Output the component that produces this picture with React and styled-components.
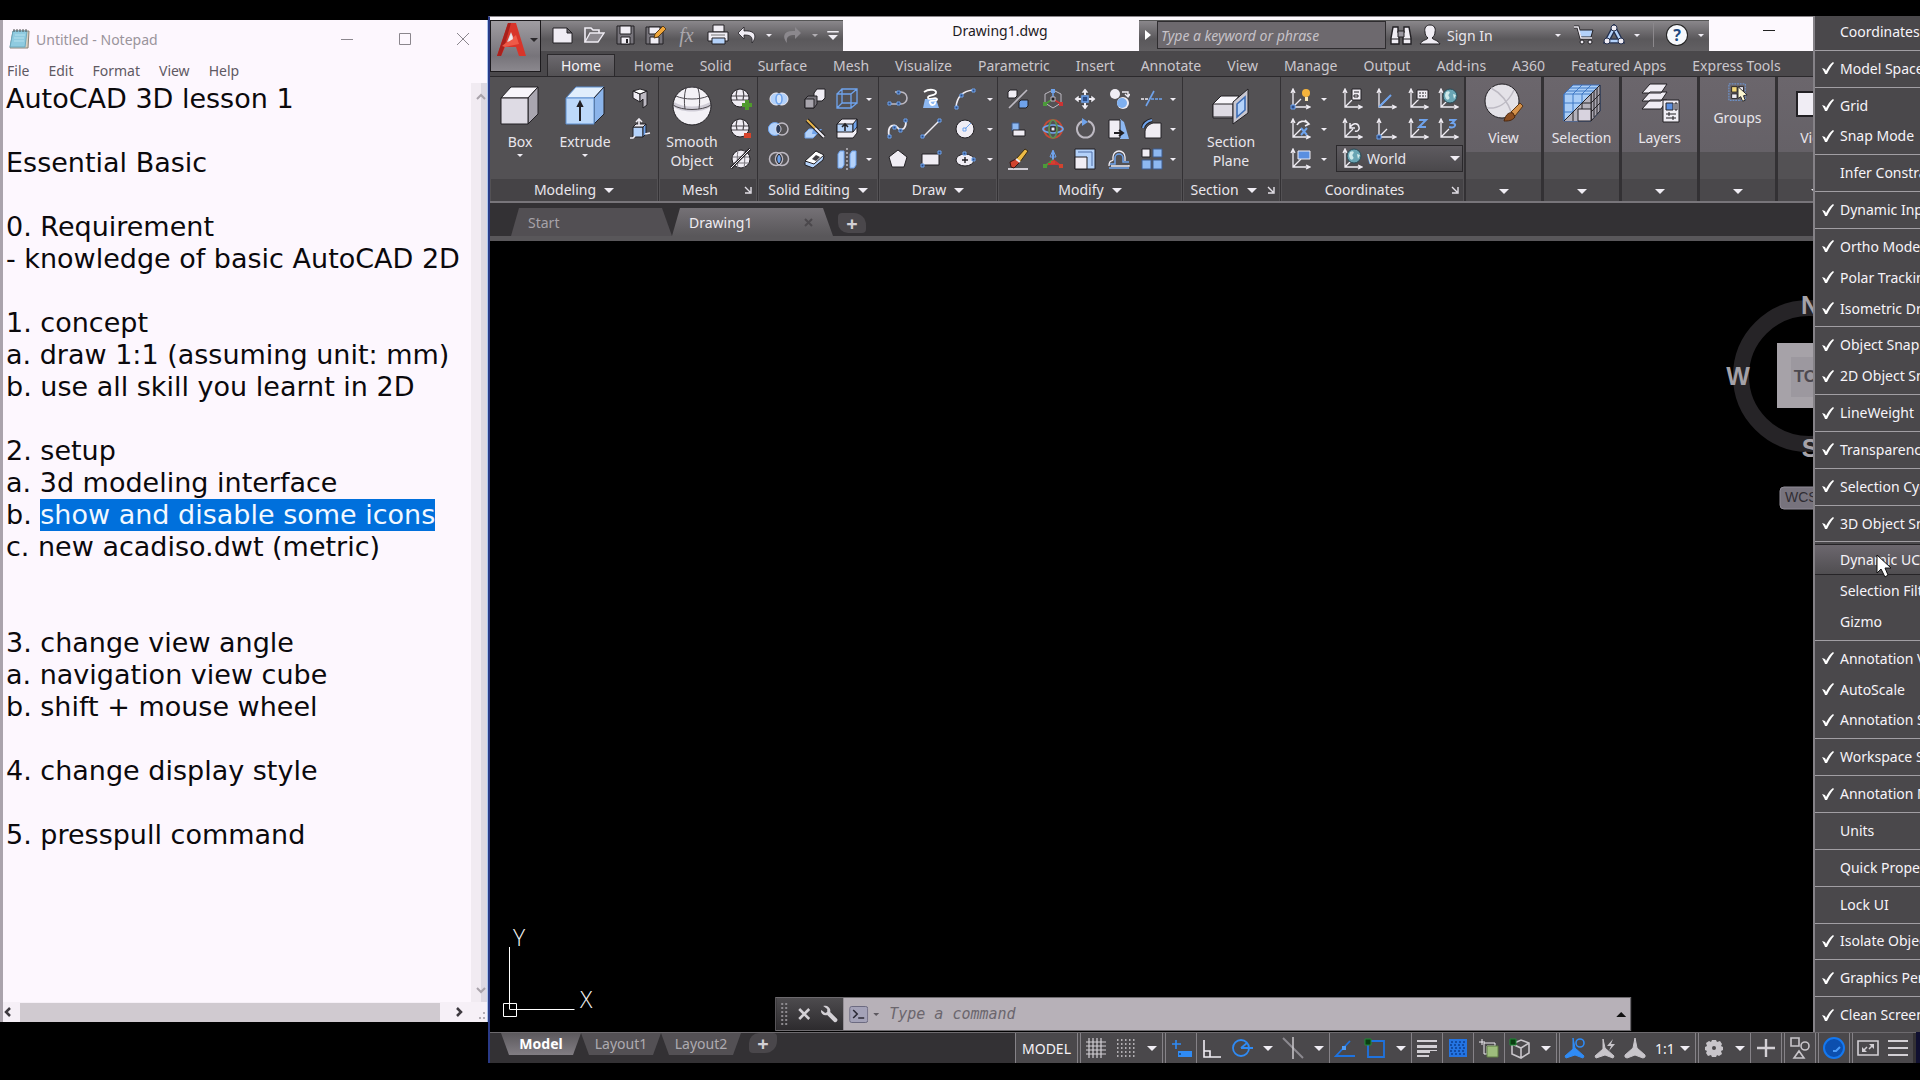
import React, { useEffect, useRef, useState } from 'react';
import styled, { createGlobalStyle, css } from 'styled-components';

const NOTE_TEXT = `AutoCAD 3D lesson 1

Essential Basic

0. Requirement
- knowledge of basic AutoCAD 2D

1. concept
a. draw 1:1 (assuming unit: mm)
b. use all skill you learnt in 2D

2. setup
a. 3d modeling interface
b. show and disable some icons
c. new acadiso.dwt (metric)


3. change view angle
a. navigation view cube
b. shift + mouse wheel

4. change display style

5. presspull command`;
const SELECTED_TEXT = 'show and disable some icons';

const RIBBON_TABS = [
  'Home',
  'Solid',
  'Surface',
  'Mesh',
  'Visualize',
  'Parametric',
  'Insert',
  'Annotate',
  'View',
  'Manage',
  'Output',
  'Add-ins',
  'A360',
  'Featured Apps',
  'Express Tools',
];

// every inner array is one block between two separator lines
const MENU_GROUPS = [
  [['Coordinates', false]],
  [['Model Space', true]],
  [['Grid', true], ['Snap Mode', true]],
  [['Infer Constraints', false]],
  [['Dynamic Input', true]],
  [['Ortho Mode', true], ['Polar Tracking', true], ['Isometric Drafting', true]],
  [['Object Snap Tracking', true], ['2D Object Snap', true]],
  [['LineWeight', true]],
  [['Transparency', true]],
  [['Selection Cycling', true]],
  [['3D Object Snap', true]],
  [['Dynamic UCS', false], ['Selection Filtering', false], ['Gizmo', false]],
  [['Annotation Visibility', true], ['AutoScale', true], ['Annotation Scale', true]],
  [['Workspace Switching', true]],
  [['Annotation Monitor', true]],
  [['Units', false]],
  [['Quick Properties', false]],
  [['Lock UI', false]],
  [['Isolate Objects', true]],
  [['Graphics Performance', true]],
  [['Clean Screen', true]],
];

const W = '#f0edf4';
const G = '#bdb9c2';
const D = '#222024';
const B = '#6fa3ec';
const LB = '#b4d2fa';

const axes = (
  <path
    d="M4 2v17h16M2 5l2-4 2 4M17 17l4 2-4 2M4 19l8-8"
    fill="none"
    stroke={W}
    strokeWidth="1.3"
  />
);
const meshBall = (
  <>
    <circle cx="10" cy="10" r="9" fill={W} stroke={D} />
    <path
      d="M1.500 8h17M2 12h16M7 1.500C6 5 6 9 7 12M13 1.500c1 3.500 1 7 0 10.500"
      fill="none"
      stroke="#4a474c"
      strokeWidth="1.2"
    />
  </>
);

// all small drawings sit on a 22x22 grid
const icons = {
  newFile: <path d="M1 4h14l5 5v10H1zM15 4v5h5" fill={W} stroke={D} />,
  open: (
    <>
      <path d="M2 18V4h6l2 2h6v4" fill="none" stroke={W} strokeWidth="1.6" />
      <path d="M2 18L7 9h14l-6 9z" fill="#8d8a90" stroke={W} strokeWidth="1.3" />
    </>
  ),
  save: (
    <>
      <path d="M3 2h17v18H3z" fill="#77747b" stroke={D} />
      <path d="M6 2h11v8H6zM7 13h9v7H7z" fill={W} stroke={D} />
      <path d="M12 15h2v4h-2z" fill={D} />
    </>
  ),
  saveAs: (
    <>
      <path d="M1 3h17v17H1z" fill="#77747b" stroke={D} />
      <path d="M4 3h11v7H4zM5 13h9v7H5z" fill={W} stroke={D} />
      <path d="M9 14l1-4 8-8 3 3-8 8z" fill="#f0a63a" stroke="#5a3c16" />
    </>
  ),
  print: (
    <>
      <path d="M6 1h11v7H6z" fill={W} stroke={D} />
      <path d="M1 8h20v9H1z" fill={W} stroke={D} />
      <path d="M5 14h13v6H5z" fill={LB} stroke={D} />
      <path d="M4 11h14" stroke="#777" />
    </>
  ),
  undo: (
    <path
      d="M8 3L2 9l6 6v-4c6 0 9 1 8 8 5-6 4-13-8-12z"
      fill={W}
      stroke={D}
      strokeWidth=".8"
    />
  ),
  redo: <path d="M14 3l6 6-6 6v-4c-6 0-9 1-8 8-5-6-4-13 8-12z" fill="#8b888d" />,
  more: <path d="M4 6h14v2H4zM5 11h12l-6 6z" fill={W} />,
  binoculars: (
    <>
      <path d="M3 3h5v5h1v12H1v-6zM14 3h5l2 11v6h-8V8h1z" fill={W} stroke={D} strokeWidth="1.4" />
      <path d="M8 7h6v6H8z" fill="#9a97a0" stroke={D} />
      <path d="M1 15h8M13 15h8" stroke={D} />
    </>
  ),
  person: (
    <path
      d="M11 1c4 0 6 3 5 7 0 3-1 4-3 6 1 2 6 2 8 6H1c2-4 7-4 8-6-2-2-3-3-3-6-1-4 1-7 5-7z"
      fill={W}
      stroke={D}
    />
  ),
  cart: (
    <>
      <path d="M1 3h4l3 11h11" fill="none" stroke={D} strokeWidth="3" />
      <path d="M5 6h15l-2 7H8z" fill={LB} stroke={D} />
      <path d="M1 3h4l3 11h11" fill="none" stroke={W} strokeWidth="1.4" />
      <circle cx="9" cy="18" r="2" fill={W} stroke={D} />
      <circle cx="17" cy="18" r="2" fill={W} stroke={D} />
    </>
  ),
  exchange: (
    <>
      <path d="M11 4L4 17h14z" fill="none" stroke="#24304f" strokeWidth="5" />
      <path d="M11 4L4 17h14z" fill="none" stroke={LB} strokeWidth="2.4" />
      <circle cx="11" cy="4" r="3" fill={W} stroke="#24304f" />
      <circle cx="4" cy="17" r="3" fill={W} stroke="#24304f" />
      <circle cx="18" cy="17" r="3" fill={W} stroke="#24304f" />
    </>
  ),
  polysolid: (
    <>
      <path d="M4 3l7 3v8l-7-4z" fill={W} stroke={D} />
      <path d="M11 6l7-3v14l-4 3v-9l-3 3z" fill={G} stroke={D} />
      <path d="M4 3l7-2 7 2-7 3z" fill="#fff" stroke={D} />
    </>
  ),
  presspull: (
    <>
      <path d="M4 9h10v10H4z" fill={LB} stroke={D} />
      <path d="M4 9l3-3h10l-3 3z" fill={W} stroke={D} />
      <path d="M14 9l3-3v10l-3 3z" fill={B} stroke={D} />
      <path d="M10 8V1M7 4l3-3 3 3M1 20h3l2-2M16 16l5-1" fill="none" stroke={W} strokeWidth="1.6" />
    </>
  ),
  meshAdd: (
    <>
      {meshBall}
      <path d="M15 12h4v3h3v4h-3v3h-4v-3h-3v-4h3z" fill="#4f9a2c" />
    </>
  ),
  meshLess: (
    <>
      {meshBall}
      <path d="M14 15h7v5h-7z" fill="#d6432b" />
    </>
  ),
  meshCrease: (
    <>
      <circle cx="11" cy="11" r="9" fill={W} stroke={D} />
      <path d="M2 9h17M8 2c-1 6-1 12 0 18M14 2c1 6 1 12 0 18M3 15h16" fill="none" stroke="#77747b" />
      <path d="M1 20L20 1" stroke={D} strokeWidth="2.500" />
      <path d="M1 20L20 1" stroke={W} />
    </>
  ),
  union: (
    <>
      <path d="M8 5c2 0 2 .5 3 1 1-.5 1-1 3-1a6 6 0 010 12c-2 0-2-.5-3-1-1 .5-1 1-3 1A6 6 0 018 5z" fill={LB} stroke={W} />
      <ellipse cx="11" cy="11" rx="3" ry="5" fill="#d5e5fb" stroke={B} strokeWidth="1.6" />
    </>
  ),
  subtract: (
    <>
      <circle cx="14" cy="11" r="6" fill="none" stroke={G} strokeWidth="1.5" />
      <path d="M11 6a6.500 6.500 0 100 10c-3-3-3-7 0-10z" fill={LB} stroke={B} />
      <path d="M10 6c-3 3-3 7 0 10 4-3 4-7 0-10z" fill="#2e3c58" stroke={W} strokeWidth=".8" />
    </>
  ),
  intersect: (
    <>
      <circle cx="8" cy="11" r="6.500" fill="none" stroke={G} strokeWidth="1.5" />
      <circle cx="14" cy="11" r="6.500" fill="none" stroke={G} strokeWidth="1.5" />
      <path d="M11 6c3 3 3 7 0 10-3-3-3-7 0-10z" fill={B} stroke={D} />
    </>
  ),
  extractEdges: (
    <>
      <path d="M10 5l3-4h8v9l-3 3h-8z" fill={W} stroke={D} />
      <path d="M1 11l3-3h9v8l-3 4H1z" fill="#77747b" stroke={D} />
      <path d="M1 11h9v9H1z" fill="#a9a6ae" stroke={D} />
    </>
  ),
  slice: (
    <>
      <path d="M1 15l4-4h9l-2 6-3 3H1z" fill={LB} stroke={B} />
      <path d="M9 11h9l-3 5H8z" fill={B} />
      <path d="M3 2l9 9 8 8" stroke={D} strokeWidth="4" />
      <path d="M3 2l8 8" stroke="#e9b64b" strokeWidth="2" />
      <path d="M11 10l9 9" stroke={W} strokeWidth="2" />
    </>
  ),
  thicken: (
    <>
      <path d="M1 14L12 3l8 5-1 4-10 8-8-3z" fill={LB} stroke={D} />
      <path d="M1 13L12 3l8 4-10 9z" fill="#fff" stroke={D} />
      <path d="M8 11l4-4 4 2-4 4z" fill="#3f3d42" />
    </>
  ),
  wireBox: (
    <path
      d="M1 6h14v14H1zM6 1h15v14H6zM1 6l5-5M15 6l6-5M15 20l6-5M1 20l5-5"
      fill="none"
      stroke={B}
      strokeWidth="1.3"
    />
  ),
  extrudeFace: (
    <>
      <path d="M1 6l5-5h15v14l-4 5H1z" fill={W} stroke={D} />
      <path d="M1 6h16v8H1z" fill={LB} stroke={D} />
      <path d="M17 6l4-5v8l-4 5z" fill={B} stroke={D} />
      <path d="M9 13V7M6 9l3-3 3 3" fill="none" stroke={D} strokeWidth="1.6" />
    </>
  ),
  separate: (
    <>
      <path d="M2 6l2-3h4v14l-2 3H2z" fill={LB} stroke={B} />
      <path d="M14 6l2-3h4v14l-2 3h-4z" fill={LB} stroke={B} />
      <path d="M11 0v22" stroke={W} strokeDasharray="2 2" />
    </>
  ),
  polyline: (
    <>
      <path d="M2 16h8M8 4h6a6 6 0 010 12h-2" fill="none" stroke={G} strokeWidth="1.6" />
      <path d="M1 14h3v3H1zM10 14h3v3h-3zM10 3h3v3h-3z" fill="#2c4c86" stroke={B} />
    </>
  ),
  helix: (
    <>
      <path d="M3 20l2-9h11l3 9z" fill="#8db8f2" />
      <path
        d="M4 4c6-4 13-2 12 1s-9 2-8 5 8-2 9 1-9 0-7 4 6 1 5-1"
        fill="none"
        stroke="#fff"
        strokeWidth="1.8"
      />
    </>
  ),
  spline: (
    <>
      <path d="M2 18c-2-12 6-12 8-9s9 5 9-6" fill="none" stroke={W} strokeWidth="1.8" />
      <path d="M1 17h3v3H1zM6 8h3v3H6zM12 11h3v3h-3zM17 1h3v3h-3z" fill="#2c4c86" stroke={B} />
    </>
  ),
  line: (
    <>
      <path d="M3 19L19 3" stroke={W} strokeWidth="1.5" />
      <path d="M1 17h3v3H1zM18 1h3v3h-3z" fill="#2c4c86" stroke={B} />
    </>
  ),
  polygon: <path d="M11 2l9 7-3 10H5L2 9z" fill={W} stroke={D} />,
  rectangle: (
    <>
      <path d="M2 6h17v11H2z" fill={W} stroke={D} />
      <path d="M1 16h3v3H1zM18 3h3v3h-3z" fill="#2c4c86" stroke={B} />
    </>
  ),
  arc: (
    <>
      <path d="M2 19C3 9 9 3 19 2" fill="none" stroke={W} strokeWidth="1.6" />
      <path d="M1 18h3v3H1zM6 6h3v3H6zM18 1h3v3h-3z" fill="#2c4c86" stroke={B} />
    </>
  ),
  circle: (
    <>
      <circle cx="11" cy="11" r="9" fill={W} stroke={D} />
      <path d="M11 11l6-6M9 10h3v3H9z" fill="none" stroke={B} />
    </>
  ),
  ellipse: (
    <>
      <ellipse cx="11" cy="12" rx="9" ry="6" fill={W} stroke={D} />
      <path d="M11 9v6M8 12h6" stroke={D} strokeWidth="1.4" />
      <path d="M9 4h3v3H9zM18 10h3v3h-3z" fill="#2c4c86" stroke={B} />
    </>
  ),
  flip: (
    <>
      <path d="M1 4l2-2h7v6l-2 2H1z" fill={W} stroke={D} />
      <path d="M12 14l2-2h7v6l-2 2h-7z" fill={B} stroke={D} />
      <path d="M2 20L20 2" stroke={G} strokeWidth="1.6" />
    </>
  ),
  gizmoMove: (
    <>
      <path d="M11 2l8 4v9l-8 5-8-5V6z" fill="none" stroke={G} />
      <path d="M11 11V2" stroke={B} strokeWidth="1.5" />
      <path d="M11 11l-8 5" stroke="#4c9a3a" strokeWidth="1.5" />
      <path d="M11 11l8 5" stroke="#c33" strokeWidth="1.5" />
      <path d="M9 1h4v4H9z" fill={B} />
      <path d="M1 14h4v4H1z" fill="#4c9a3a" />
      <path d="M17 14h4v4h-4z" fill="#c33" />
      <path d="M9 9h4v4H9z" fill={D} stroke={G} />
    </>
  ),
  move: (
    <>
      <path
        d="M11 0l4 5H7zM11 22l4-5H7zM0 11l5-4v8zM22 11l-5-4v8z"
        fill={W}
        stroke={D}
        strokeWidth=".5"
      />
      <path d="M11 4v3M11 15v3M4 11h3M15 11h3" stroke={W} strokeWidth="2" />
      <path d="M8 8h6v6H8z" fill="#2c4c86" stroke={B} strokeWidth="1.5" />
    </>
  ),
  copy: (
    <>
      <circle cx="7" cy="6" r="5" fill={W} />
      <path d="M14 4h6v5M17 6l3 3 2-3" fill="none" stroke={W} strokeWidth="1.4" />
      <circle cx="15" cy="15" r="6" fill={W} />
      <circle cx="14" cy="15" r="5" fill="#7fb0f0" />
    </>
  ),
  trim: (
    <>
      <path d="M0 11h9" stroke={W} strokeDasharray="3 1" strokeWidth="1.5" />
      <path d="M10 11h12" stroke={B} strokeDasharray="3 1" strokeWidth="1.5" />
      <path d="M5 18L13 3" stroke={B} strokeWidth="1.6" />
    </>
  ),
  align: (
    <>
      <path d="M5 5h7v8H5z" fill="#8db8f2" stroke="#3e5c8e" />
      <path d="M6 12h12v6H6z" fill={W} stroke={D} />
    </>
  ),
  gizmoRotate: (
    <>
      <circle cx="11" cy="11" r="9" fill="none" stroke="#c94a35" strokeWidth="2" />
      <ellipse cx="11" cy="11" rx="10" ry="4" fill="none" stroke={B} strokeWidth="1.7" />
      <ellipse cx="11" cy="11" rx="4" ry="9" fill="none" stroke="#5b8f53" strokeWidth="1.7" />
      <path d="M9 9h4v4H9z" fill={W} stroke={D} />
    </>
  ),
  rotate: (
    <>
      <path d="M9 3a8.500 8.500 0 105 0" fill="none" stroke={G} strokeWidth="2" />
      <path d="M8 0l6 4-6 4z" fill={B} />
    </>
  ),
  taper: (
    <>
      <path d="M12 1l4 3 5 17H12z" fill="#8db8f2" />
      <path d="M1 2h11v18H1z" fill={W} stroke={D} />
      <path d="M6 15h8M11 12l4 3-4 3" fill="none" stroke={D} strokeWidth="2" />
    </>
  ),
  fillet: (
    <>
      <path d="M4 20V13c1-5 5-7 8-8h8v15z" fill={W} stroke={D} />
      <path d="M2 10c1-5 5-7 9-8" fill="none" stroke={D} strokeWidth="4" />
      <path d="M2 10c1-5 5-7 9-8" fill="none" stroke={B} strokeWidth="2" />
    </>
  ),
  erase: (
    <>
      <path d="M1 21h20" stroke={W} strokeWidth="1.6" />
      <path d="M9 11L18 1l3 2-8 11z" fill="#eebb45" stroke="#3a2c12" />
      <path d="M3 14l6-3 4 3-6 6-3-1z" fill="#d1432e" stroke="#3a1612" />
      <path d="M9 11l4 3" stroke={W} strokeWidth="2" />
    </>
  ),
  gizmoScale: (
    <>
      <path d="M11 3v9" stroke={B} strokeWidth="2" />
      <path d="M11 12l-8 6" stroke="#4c9a3a" strokeWidth="2" />
      <path d="M11 12l8 6M6 16h10" stroke="#c33" strokeWidth="2" />
      <path d="M8 9l3-7 3 7z" fill="none" stroke={B} />
      <path d="M1 16h4v4H1z" fill="#4c9a3a" />
      <path d="M17 16h4v4h-4zM9 13h4v3H9z" fill="#d1432e" />
    </>
  ),
  scale: (
    <>
      <path d="M1 1h20v20H1z" fill={LB} stroke={D} />
      <path d="M4 4h14v14" fill="none" stroke="#4f6fa8" />
      <path d="M1 9h12v12H1z" fill={W} stroke={D} />
    </>
  ),
  offset: (
    <>
      <path d="M1 20h20M1 16h6v-6a4 4 0 018 0v4h6" fill="none" stroke={B} strokeWidth="1.5" />
      <path d="M3 18h18v-1M1 18c0-7 3-4 4-6V9a6 6 0 0112 0v4" fill="none" stroke={W} strokeWidth="1.3" />
    </>
  ),
  array: (
    <>
      <path d="M1 1h8v8H1z" fill={W} stroke={D} />
      <path d="M12 1h9v8h-9zM1 12h9v9H1zM12 12h9v9h-9z" fill="#8db8f2" stroke="#3e5c8e" />
    </>
  ),
  ucs: (
    <>
      {axes}
      <path d="M2 17h4v4H2z" fill="#2c4c86" stroke={B} />
      <circle cx="17" cy="5" r="4" fill="#f6b43c" />
      <path d="M16 9h3v4h-3z" fill="#fbe7b5" />
    </>
  ),
  ucsNamed: (
    <>
      {axes}
      <path d="M11 1h9v11h-9z" fill={W} stroke={D} />
      <path d="M13 4h5M13 7h4v2h-4z" fill="none" stroke={D} />
    </>
  ),
  ucsOrigin: (
    <>
      {axes}
      <path d="M4 19L16 7" stroke={B} strokeWidth="2" />
    </>
  ),
  ucsIcon: (
    <>
      {axes}
      <path d="M10 2h11v9H10z" fill={W} stroke={D} />
      <path d="M12 5h7M12 8h7" stroke={D} strokeDasharray="2 1" />
    </>
  ),
  ucsWorld: (
    <>
      {axes}
      <circle cx="13" cy="8" r="7" fill="#69a5b4" stroke="#2b4a55" />
      <path d="M9 4c3-2 5 0 3 2s2 3 0 5-4-1-4-4zM16 6l3 1-2 4z" fill="#cfe9ea" />
    </>
  ),
  ucsX: (
    <>
      {axes}
      <path d="M8 7c2-4 7-5 11-2M16 2l4 4-4 2" fill="none" stroke={W} strokeWidth="1.6" />
      <path d="M12 10l6 7M18 10l-6 7" stroke={B} strokeWidth="2" />
    </>
  ),
  ucsPrev: (
    <>
      {axes}
      <path d="M9 5v5h5M9 10c2-5 8-6 9-1 1 3-2 5-4 4" fill="none" stroke={W} strokeWidth="1.5" />
    </>
  ),
  ucsView: (
    <>
      {axes}
      <path d="M2 17h4v4H2z" fill="#2c4c86" stroke={B} />
    </>
  ),
  ucsZ: (
    <>
      {axes}
      <path d="M12 2h7l-7 7h7" fill="none" stroke={B} strokeWidth="2" />
    </>
  ),
  ucs3: (
    <>
      {axes}
      <path d="M12 2h6l-3 3c5 0 4 6-3 4" fill="none" stroke={B} strokeWidth="2" />
    </>
  ),
  ucsFace: (
    <>
      {axes}
      <path d="M9 3h12v8H9z" fill="#5b8fe0" stroke={W} />
    </>
  ),
  groups: (
    <>
      <path d="M1 1h18v18H1z" fill="none" stroke={B} strokeDasharray="2 1" />
      <path d="M4 4h6v6H4z" fill="#f3d77a" stroke={D} />
      <path d="M4 12h6v5H4zM12 4h5v5h-5z" fill={W} stroke={D} />
      <path d="M11 4l10 9-4 1 2 5-3 1-2-5-3 2z" fill="#fbf6d2" stroke={D} />
    </>
  ),
  gridLines: (
    <path
      d="M4 1v20M8 1v20M12 1v20M16 1v20M1 5h20M1 9h20M1 13h20M1 17h20"
      stroke="#d3d0d5"
      strokeWidth="1.2"
      strokeDasharray="20"
    />
  ),
  gridDots: (
    <path
      d="M2 3h19M2 7h19M2 11h19M2 15h19M2 19h19"
      stroke="#d3d0d5"
      strokeWidth="1.5"
      strokeDasharray="1.5 2.500"
    />
  ),
  dynInput: (
    <>
      <path d="M6 3v9M2 7h9" stroke="#2f8bf5" strokeWidth="1.6" />
      <path d="M8 14h14v6H8z" fill="#2f8bf5" />
      <path d="M10 16v2" stroke="#123" />
    </>
  ),
  ortho: <path d="M3 3v17h17M3 14h6v6" fill="none" stroke={W} strokeWidth="1.6" />,
  polar: (
    <>
      <circle cx="10" cy="11" r="8" fill="none" stroke="#2f8bf5" strokeWidth="1.8" />
      <path d="M10 11h12M10 11l6-5" stroke="#2f8bf5" strokeWidth="1.8" />
    </>
  ),
  isoDraft: (
    <>
      <path d="M1 1l20 20" stroke="#8d8a90" strokeWidth="2" />
      <path d="M11 0v22" stroke="#d3d0d5" strokeWidth="1.4" />
    </>
  ),
  otrack: (
    <>
      <path d="M16 4L2 19h19" fill="none" stroke="#1e73e0" strokeWidth="1.8" />
      <path d="M8 9h4v4H8z" fill="#4d9cf7" />
    </>
  ),
  osnap: (
    <>
      <path d="M4 4h16v16H4z" fill="none" stroke="#1e73e0" strokeWidth="1.8" />
      <path d="M1 2h6v6H1z" fill="#0b3d12" stroke="#1e8a35" />
    </>
  ),
  lineweight: <path d="M1 3h20v2H1zM1 8h20v3H1zM1 13h13v3H1zM14 13h7v1h-7zM1 18h12v2H1z" fill="#d3d0d5" />,
  transparency: (
    <>
      <path d="M2 2h18v18H2z" fill="#2474e2" />
      <path
        d="M4 5h15M3 8h15M4 11h15M3 14h15M4 17h15"
        stroke="#0d3f91"
        strokeWidth="1.5"
        strokeDasharray="2 2"
      />
    </>
  ),
  cycling: (
    <>
      <path d="M4 2v6M1 5h6" stroke={W} />
      <path d="M6 6h11v3H9v8H6z" fill="none" stroke={W} />
      <path d="M9 9h11v11H9z" fill="#9dbd7c" stroke="#5f7c45" />
    </>
  ),
  osnap3d: (
    <>
      <path
        d="M3 7l9-4 8 3v10l-8 5-9-4zM3 7l9 4 8-5M12 11v10"
        fill="none"
        stroke="#c8c5ca"
        strokeWidth="1.6"
      />
      <path d="M1 2h6v6H1z" fill="#0b3d12" stroke="#1e8a35" />
    </>
  ),
  annBlue: (
    <>
      <path d="M9 1l2 10 9 8-1 2-8-3-9 3-1-2 8-7z" fill="#2f8bf5" stroke="#2f8bf5" />
      <circle cx="16" cy="6" r="4" fill="none" stroke="#2f8bf5" strokeWidth="1.6" />
    </>
  ),
  annAuto: (
    <>
      <path d="M9 2l2 9 9 8-1 2-8-3-9 3-1-2 8-7z" fill="#c8c5ca" stroke="#c8c5ca" />
      <path d="M19 2l-6 7h4l-2 5 6-7h-4z" fill="#c8c5ca" />
    </>
  ),
  ann: (
    <path
      d="M11 1l2 10 8 7v2l-2 1-8-3-8 3-2-1v-2l8-7z"
      fill="#c8c5ca"
      stroke="#c8c5ca"
    />
  ),
  gear: (
    <>
      <path
        d="M9 3h4l1 2 3-1 2 3-1 2 2 1v3l-2 1 1 3-3 2-2-1-1 2H9l-1-2-3 1-2-3 1-2-2-1v-3l2-1-1-3 3-2 2 1z"
        fill="#c8c5ca"
      />
      <circle cx="11" cy="11" r="2" fill="#4a484b" />
    </>
  ),
  plus: <path d="M11 2v18M2 11h18" stroke="#d3d0d5" strokeWidth="2.4" />,
  isolate: (
    <path
      d="M2 1h8v8H2zM10 14l5 7H5zM16 5a4 4 0 100 8 4 4 0 100-8z"
      fill="none"
      stroke="#c8c5ca"
      strokeWidth="1.6"
    />
  ),
  perf: (
    <>
      <circle cx="11" cy="11" r="10" fill="#0c4fae" stroke="#1478f0" strokeWidth="2" />
      <path d="M10 14h3l4-4" fill="none" stroke="#4b9bf8" strokeWidth="2" />
    </>
  ),
  fullscreen: (
    <>
      <path d="M1 4h20v14H1z" fill="none" stroke="#d3d0d5" strokeWidth="1.6" />
      <path d="M5 15v-5l5 5zM17 7v5l-5-5z" fill="#d3d0d5" />
      <path d="M7 13l3-3M15 9l-3 3" stroke="#d3d0d5" strokeWidth="1.5" />
    </>
  ),
  burger: <path d="M1 4h20M1 11h20M1 18h20" stroke="#d3d0d5" strokeWidth="2.2" />,
};

// large ribbon drawings, 40x40 grid
const bigIcons = {
  box: (
    <>
      <path d="M1 12L11 1h27L28 12z" fill="#f8f6fb" stroke={D} />
      <path d="M28 12L38 1v27L28 38z" fill="#a9a6b0" stroke={D} />
      <path d="M1 12h27v26H1z" fill="#dedbe4" stroke={D} />
    </>
  ),
  extrude: (
    <>
      <path d="M1 12L11 1h28L29 12z" fill="#e1eefc" stroke="#5d8fd0" />
      <path d="M29 12L39 1v27L29 38z" fill="#8bb4ea" stroke={D} />
      <path d="M1 12h28v26H1z" fill="#bdd9fa" stroke="#5d8fd0" />
      <path d="M15 35V18M13 20l2-4 2 4z" stroke={D} strokeWidth="2" fill={D} />
    </>
  ),
  smooth: (
    <>
      <circle cx="20" cy="20" r="19" fill="#f3f1f6" stroke={D} />
      <path d="M2 16c10 6 26 6 36 0v5c-8 6-28 6-36 0z" fill="#cfccd6" />
      <path
        d="M1 19c9 6 29 6 38 0M4 10c8 4 24 4 32 0M14 2c-2 7-2 14-1 21M26 2c2 7 2 14 1 21M14 2c4-2 8-2 12 0"
        fill="none"
        stroke="#4d4a50"
      />
    </>
  ),
  section: (
    <>
      <path d="M2 18l8-8h18l-6 8v14H2z" fill="#f8f6fb" stroke={D} />
      <path d="M2 18h20v13H2z" fill="#dedbe4" stroke={D} />
      <path d="M22 16L37 3v24L22 38z" fill="#c9c7d0" stroke={D} />
      <path d="M26 18l8-7v13l-8 7z" fill={LB} stroke="#3e6db5" strokeWidth="1.6" />
    </>
  ),
  view: (
    <>
      <circle cx="18" cy="18" r="17" fill="#e4e2e8" stroke={D} />
      <path d="M7 5c10 5 17 14 21 26M30 7C24 20 14 26 3 25" fill="none" stroke="#bdbac3" strokeWidth="1.5" />
      <path d="M27 29L36 20l3 3-8 10z" fill="#d5924a" stroke="#5b3514" />
      <path d="M20 38c2-8 6-9 9-8l2 4c-3 4-7 4-11 4z" fill="#8c4e21" stroke="#4b270d" />
    </>
  ),
  selection: (
    <>
      <path d="M2 11L11 2h27v26l-9 10H2z" fill="#a9cdf7" stroke="#3e6db5" />
      <path d="M29 11l9-9v26l-9 10z" fill="#aaa7b2" stroke={D} />
      <path d="M2 38L29 11v27z" fill="#b4b1bb" />
      <path
        d="M2 11h27M2 20h18M2 29h9M2 11v27M11 11v18M20 11v9M11 11l9-9M20 11l9-9M5 8h27M8 5h27"
        fill="none"
        stroke="#3f78c4"
      />
      <path
        d="M32 8v26M35 5v26M29 20l9-9M29 29l9-9M2 38L29 11v27M20 20v18M11 29v9M20 20h9"
        fill="none"
        stroke={D}
      />
      <path d="M16 26h13v12H16z" fill="#d8d3df" stroke={D} />
    </>
  ),
  layers: (
    <>
      <path d="M2 26l8-9h17l-6 9zM2 18l8-9h17l-6 9zM2 10l8-9h17l-6 9z" fill={W} stroke={D} />
      <path d="M23 17h16v22H23z" fill={W} stroke={D} />
      <path d="M26 20h7v7h-7z" fill="#5b8fe0" stroke={D} />
      <path d="M35 20h2v7h-2zM26 31h10M26 35h10M29 29v4M33 33v4" fill="none" stroke={D} />
    </>
  ),
  viewport: <path d="M1 9h34v24H1z" fill={W} stroke={D} strokeWidth="2" />,
};

function Icon({ name, size = 22 }) {
  return (
    <svg width={size} height={size} viewBox="0 0 22 22" aria-hidden="true">
      {icons[name]}
    </svg>
  );
}

function BigIcon({ name }) {
  return (
    <svg width="40" height="40" viewBox="0 0 40 40" aria-hidden="true">
      {bigIcons[name]}
    </svg>
  );
}

function Caret({ size = 8, color = '#f0edf4' }) {
  return (
    <svg width={size} height={size / 2} viewBox="0 0 8 4" aria-hidden="true">
      <path d="M0 0h8L4 4z" fill={color} />
    </svg>
  );
}

function Launcher() {
  return (
    <svg width="8" height="8" viewBox="0 0 8 8" aria-hidden="true">
      <path d="M1 1l5 5M7 1v6H1" fill="none" stroke="#e4e1e8" strokeWidth="1.4" />
    </svg>
  );
}

function IconRows({ columns, rows }) {
  return (
    <IconGrid $columns={columns}>
      {rows.flat().map((name, i) => {
        if (name === 'caret') {
          return (
            <ToolButton key={i} aria-label="More">
              <Caret size={6} />
            </ToolButton>
          );
        }
        return (
          <ToolButton key={i} aria-label={name}>
            <Icon name={name} />
          </ToolButton>
        );
      })}
    </IconGrid>
  );
}

function Panel({ title, width, caret, launcher, children }) {
  return (
    <PanelBox $width={width}>
      <PanelBody>{children}</PanelBody>
      <PanelTitle>
        <PanelName>
          {title}
          {caret && <Caret size={10} />}
        </PanelName>
        {launcher && (
          <LaunchButton aria-label={`${title} settings`}>
            <Launcher />
          </LaunchButton>
        )}
      </PanelTitle>
    </PanelBox>
  );
}

function Notepad() {
  const textRef = useRef(null);
  const [text, setText] = useState(NOTE_TEXT);

  useEffect(() => {
    const start = NOTE_TEXT.indexOf(SELECTED_TEXT);
    textRef.current.focus({ preventScroll: true });
    textRef.current.setSelectionRange(start, start + SELECTED_TEXT.length);
  }, []);

  return (
    <NotepadWindow>
      <NoteTitleBar>
        <svg width="22" height="22" viewBox="0 0 22 22" aria-hidden="true">
          <path d="M4 3h16l-1 17H1z" fill="#d8cfc0" stroke="#8a8378" />
          <path d="M4 3h14l-2 16H1z" fill="#8fcbe0" stroke="#6aa9bf" />
          <path d="M6 7h10M5 10h10M5 13h10" stroke="#b5e0ee" />
          <path d="M5 1v3M8 1v3M11 1v3M14 1v3M17 1v3" stroke="#555" />
        </svg>
        <NoteTitle>Untitled - Notepad</NoteTitle>
        <WindowButton aria-label="Minimize">
          <svg width="14" height="14" viewBox="0 0 14 14">
            <path d="M1 7.500h12" stroke="#8b868d" />
          </svg>
        </WindowButton>
        <WindowButton aria-label="Maximize">
          <svg width="14" height="14" viewBox="0 0 14 14">
            <path d="M1.500 1.500h11v11h-11z" fill="none" stroke="#8b868d" />
          </svg>
        </WindowButton>
        <WindowButton aria-label="Close">
          <svg width="14" height="14" viewBox="0 0 14 14">
            <path d="M1 1l12 12M13 1L1 13" stroke="#8b868d" />
          </svg>
        </WindowButton>
      </NoteTitleBar>
      <NoteMenu>
        {['File', 'Edit', 'Format', 'View', 'Help'].map((name) => (
          <NoteMenuButton key={name}>{name}</NoteMenuButton>
        ))}
      </NoteMenu>
      <NoteBody>
        <NoteText
          ref={textRef}
          wrap="off"
          spellCheck={false}
          aria-label="Text editor"
          value={text}
          onChange={(e) => {
            setText(e.target.value);
          }}
        />
        <VerticalScroll>
          <svg width="10" height="7" viewBox="0 0 10 7">
            <path d="M1 6l4-4 4 4" fill="none" stroke="#a8a2aa" strokeWidth="2" />
          </svg>
          <svg width="10" height="7" viewBox="0 0 10 7">
            <path d="M1 1l4 4 4-4" fill="none" stroke="#a8a2aa" strokeWidth="2" />
          </svg>
        </VerticalScroll>
      </NoteBody>
      <HorizontalScroll>
        <svg width="8" height="10" viewBox="0 0 8 10">
          <path d="M6 1L2 5l4 4" fill="none" stroke="#3e3a40" strokeWidth="2.500" />
        </svg>
        <ScrollThumb />
        <svg width="8" height="10" viewBox="0 0 8 10">
          <path d="M2 1l4 4-4 4" fill="none" stroke="#3e3a40" strokeWidth="2.500" />
        </svg>
        <svg width="8" height="8" viewBox="0 0 8 8">
          <path d="M5 0h2v2H5zM5 5h2v2H5zM1 5h2v2H1z" fill="#b4aeb6" />
        </svg>
      </HorizontalScroll>
    </NotepadWindow>
  );
}

function TitleBar() {
  return (
    <CadTitleBar>
      <QuickAccess>
        {['newFile', 'open', 'save', 'saveAs'].map((name) => (
          <BarButton key={name} $width={31} aria-label={name}>
            <Icon name={name} />
          </BarButton>
        ))}
        <BarButton $width={31} aria-label="Parameters manager">
          <Fx>fx</Fx>
        </BarButton>
        <BarButton $width={31} aria-label="print">
          <Icon name="print" />
        </BarButton>
        <BarButton $width={28} aria-label="undo">
          <Icon name="undo" />
        </BarButton>
        <BarButton $width={16} aria-label="Undo list">
          <Caret size={6} />
        </BarButton>
        <BarButton $width={30} aria-label="redo">
          <Icon name="redo" />
        </BarButton>
        <BarButton $width={16} aria-label="Redo list">
          <Caret size={6} color="#b0adb2" />
        </BarButton>
        <BarButton $width={20} aria-label="Customize">
          <Icon name="more" size={18} />
        </BarButton>
      </QuickAccess>
      <FileTitle>Drawing1.dwg</FileTitle>
      <InfoCenter>
        <BarButton $width={18} aria-label="Collapse">
          <svg width="6" height="10" viewBox="0 0 6 10">
            <path d="M0 0l6 5-6 5z" fill="#fff" />
          </svg>
        </BarButton>
        <SearchInput
          type="text"
          aria-label="Search"
          placeholder="Type a keyword or phrase"
        />
        <BarButton $width={30} aria-label="binoculars">
          <Icon name="binoculars" />
        </BarButton>
        <SignIn>
          <Icon name="person" />
          <span>Sign In</span>
          <Caret size={6} />
        </SignIn>
        <BarButton $width={30} aria-label="cart">
          <Icon name="cart" />
        </BarButton>
        <BarButton $width={30} aria-label="exchange">
          <Icon name="exchange" />
        </BarButton>
        <BarButton $width={16} aria-label="Exchange list">
          <Caret size={6} />
        </BarButton>
        <Divider />
        <BarButton $width={32} aria-label="Help">
          <HelpMark>?</HelpMark>
        </BarButton>
        <BarButton $width={16} aria-label="Help list">
          <Caret size={6} />
        </BarButton>
      </InfoCenter>
      <CadWindowButtons>
        <WindowButton aria-label="Minimize">
          <svg width="14" height="14" viewBox="0 0 14 14">
            <path d="M1 5.500h12" stroke="#222" />
          </svg>
        </WindowButton>
      </CadWindowButtons>
    </CadTitleBar>
  );
}

function Ribbon() {
  return (
    <RibbonBar>
      <Panel title="Modeling" width={169} caret>
        <BigButton $width={60}>
          <BigIcon name="box" />
          <span>Box</span>
          <Caret size={6} />
        </BigButton>
        <BigButton $width={70}>
          <BigIcon name="extrude" />
          <span>Extrude</span>
          <Caret size={6} />
        </BigButton>
        <IconRows columns="36px" rows={[['polysolid'], ['presspull']]} />
      </Panel>
      <Panel title="Mesh" width={99} launcher>
        <BigButton $width={66}>
          <BigIcon name="smooth" />
          <span>Smooth Object</span>
        </BigButton>
        <IconRows columns="28px" rows={[['meshAdd'], ['meshLess'], ['meshCrease']]} />
      </Panel>
      <Panel title="Solid Editing" width={121} caret>
        <IconRows
          columns="38px 34px 30px 14px"
          rows={[
            ['union', 'extractEdges', 'wireBox', 'caret'],
            ['subtract', 'slice', 'extrudeFace', 'caret'],
            ['intersect', 'thicken', 'separate', 'caret'],
          ]}
        />
      </Panel>
      <Panel title="Draw" width={119} caret>
        <IconRows
          columns="34px 32px 36px 14px"
          rows={[
            ['polyline', 'helix', 'arc', 'caret'],
            ['spline', 'line', 'circle', 'caret'],
            ['polygon', 'rectangle', 'ellipse', 'caret'],
          ]}
        />
      </Panel>
      <Panel title="Modify" width={185} caret>
        <IconRows
          columns="36px 34px 30px 38px 28px 14px"
          rows={[
            ['flip', 'gizmoMove', 'move', 'copy', 'trim', 'caret'],
            ['align', 'gizmoRotate', 'rotate', 'taper', 'fillet', 'caret'],
            ['erase', 'gizmoScale', 'scale', 'offset', 'array', 'caret'],
          ]}
        />
      </Panel>
      <Panel title="Section" width={98} caret launcher>
        <BigButton $width={96}>
          <BigIcon name="section" />
          <span>
            Section
            <br />
            Plane
          </span>
        </BigButton>
      </Panel>
      <Panel title="Coordinates" width={184} launcher>
        <CoordinateTools>
          <IconRows
            columns="34px 14px"
            rows={[
              ['ucs', 'caret'],
              ['ucsX', 'caret'],
              ['ucsFace', 'caret'],
            ]}
          />
          <div>
            <IconRows
              columns="34px 34px 30px 30px"
              rows={[
                ['ucsNamed', 'ucsOrigin', 'ucsIcon', 'ucsWorld'],
                ['ucsPrev', 'ucsView', 'ucsZ', 'ucs3'],
              ]}
            />
            <UcsPicker>
              <Icon name="ucsWorld" />
              <select aria-label="Named UCS" defaultValue="World">
                <option>World</option>
                <option>Top</option>
              </select>
              <Caret size={10} />
            </UcsPicker>
          </div>
        </CoordinateTools>
      </Panel>
      <ClosedPanels>
        {[
          ['View', 'view'],
          ['Selection', 'selection'],
          ['Layers', 'layers'],
          ['Groups', null],
          ['View', 'viewport'],
        ].map(([label, icon], i) => (
          <ClosedPanel key={i}>
            {icon ? <BigIcon name={icon} /> : <Icon name="groups" size={20} />}
            <span>{label}</span>
            <Caret size={10} />
          </ClosedPanel>
        ))}
      </ClosedPanels>
    </RibbonBar>
  );
}

function ViewCube() {
  return (
    <CubeSvg width="170" height="230" viewBox="0 0 170 230">
      <circle cx="86" cy="86" r="68" fill="none" stroke="#262427" strokeWidth="16" />
      <rect x="54" y="53" width="65" height="65" fill="#a6a2a8" />
      <rect x="68" y="67" width="37" height="40" fill="#9c989f" />
      <g fontFamily="Liberation Sans, sans-serif" fontWeight="700" textAnchor="middle">
        <text x="88" y="92" fontSize="17" fill="#4c4950">TOP</text>
        <g fontSize="25" fill="#a5a2a8">
          <text x="87" y="24">N</text>
          <text x="15" y="95">W</text>
          <text x="87" y="167">S</text>
          <text x="157" y="95">E</text>
        </g>
      </g>
      <rect x="57" y="197" width="66" height="22" rx="4" fill="#77737d" stroke="#8f8b96" />
      <text x="62" y="212" fontSize="14" fontFamily="Liberation Sans, sans-serif" fill="#2f2d33">
        WCS
      </text>
    </CubeSvg>
  );
}

function Canvas() {
  return (
    <DrawingArea>
      <ViewCube />
      <UcsSvg width="100" height="100" viewBox="0 0 100 100">
        <path d="M9.500 25v62M9.500 87.500h65M3.500 81.500h13v13h-13z" fill="none" stroke="#fff" />
        <g fontSize="23" fontFamily="Open Sans, sans-serif" fontWeight="300" fill="#f3f3f3">
          <text x="13" y="24">Y</text>
          <text x="80" y="86">X</text>
        </g>
      </UcsSvg>
      <CommandBar>
        <CommandTools>
          <svg width="8" height="22" viewBox="0 0 8 22">
            <path d="M2 0v22M6 0v22" stroke="#8d8a8f" strokeWidth="2" strokeDasharray="2 2" />
          </svg>
          <PlainButton aria-label="Close command line">
            <svg width="14" height="14" viewBox="0 0 14 14">
              <path d="M2 2l10 10M12 2L2 12" stroke="#d3d0d5" strokeWidth="2.600" />
            </svg>
          </PlainButton>
          <PlainButton aria-label="Customize command line">
            <svg width="20" height="20" viewBox="0 0 20 20">
              <path
                d="M4 2l4 3v3L6 9 2 6C1 9 4 12 8 11l7 7c2 1 4-1 3-3l-7-7c1-4-3-7-7-6z"
                fill="#d3d0d5"
              />
            </svg>
          </PlainButton>
        </CommandTools>
        <CommandField>
          <svg width="19" height="17" viewBox="0 0 19 17">
            <rect x=".5" y=".5" width="18" height="16" rx="2" fill="#a4a2b8" stroke="#6c6a80" />
            <path d="M4 4l4 4-4 4M9 12h6" fill="none" stroke="#2c2a36" strokeWidth="1.600" />
          </svg>
          <Caret size={6} color="#5d5960" />
          <CommandInput type="text" aria-label="Command" placeholder="Type a command" />
          <PlainButton aria-label="Command history">
            <svg width="10" height="5" viewBox="0 0 10 5">
              <path d="M0 5h10L5 0z" fill="#111" />
            </svg>
          </PlainButton>
        </CommandField>
      </CommandBar>
    </DrawingArea>
  );
}

function StatusBar() {
  const [active, setActive] = useState('Model');
  const tool = (name) => (
    <StatusButton key={name} aria-label={name}>
      <Icon name={name} />
    </StatusButton>
  );
  const list = (name) => (
    <StatusButton $narrow aria-label={name}>
      <Caret size={10} />
    </StatusButton>
  );

  return (
    <BottomBar>
      <LayoutTabs>
        {['Model', 'Layout1', 'Layout2'].map((name) => (
          <LayoutTab
            key={name}
            $active={active === name}
            onClick={() => {
              setActive(name);
            }}
          >
            {name}
          </LayoutTab>
        ))}
        <AddLayout aria-label="New layout">+</AddLayout>
      </LayoutTabs>
      <StatusTools>
        <StatusGroup $gap>
          <ModelButton>MODEL</ModelButton>
        </StatusGroup>
        <StatusGroup $gap>
          {tool('gridLines')}
          {tool('gridDots')}
          {list('Snap list')}
        </StatusGroup>
        <StatusGroup>{tool('dynInput')}</StatusGroup>
        <StatusGroup>
          {tool('ortho')}
          {tool('polar')}
          {list('Polar list')}
          {tool('isoDraft')}
          {list('Isodraft list')}
        </StatusGroup>
        <StatusGroup>
          {tool('otrack')}
          {tool('osnap')}
          {list('Osnap list')}
        </StatusGroup>
        <StatusGroup>{tool('lineweight')}</StatusGroup>
        <StatusGroup>{tool('transparency')}</StatusGroup>
        <StatusGroup>{tool('cycling')}</StatusGroup>
        <StatusGroup $gap>
          {tool('osnap3d')}
          {list('3D osnap list')}
        </StatusGroup>
        <StatusGroup $gap>
          {tool('annBlue')}
          {tool('annAuto')}
          {tool('ann')}
          <ScaleButton>
            1:1
            <Caret size={10} />
          </ScaleButton>
        </StatusGroup>
        <StatusGroup>
          {tool('gear')}
          {list('Workspace list')}
        </StatusGroup>
        <StatusGroup $gap>{tool('plus')}</StatusGroup>
        <StatusGroup $gap>{tool('isolate')}</StatusGroup>
        <StatusGroup $gap>{tool('perf')}</StatusGroup>
        <StatusGroup>
          {tool('fullscreen')}
          {tool('burger')}
        </StatusGroup>
      </StatusTools>
    </BottomBar>
  );
}

function CustomizeMenu() {
  return (
    <MenuBox role="menu">
      {MENU_GROUPS.map((group, i) => (
        <React.Fragment key={i}>
          {i > 0 && <MenuLine />}
          {group.map(([label, checked]) => (
            <MenuItem
              key={label}
              role="menuitemcheckbox"
              aria-checked={checked}
              $hover={label === 'Dynamic UCS'}
            >
              <svg width="14" height="14" viewBox="0 0 14 14" aria-hidden="true">
                {checked && (
                  <path
                    d="M1 7l3 1 1 2c2-4 4-7 7-9l1 1C10 5 8 9 6 13H4C3 10 2 9 1 7z"
                    fill="#fff"
                  />
                )}
              </svg>
              {label}
            </MenuItem>
          ))}
        </React.Fragment>
      ))}
    </MenuBox>
  );
}

function AutoCad() {
  return (
    <CadWindow>
      <TitleBar />
      <AppButton aria-label="Application menu">
        <svg width="32" height="36" viewBox="0 0 32 36">
          <path d="M12 1h8l10 33h-7l-3-9H9l-4 9H1z" fill="#d8352a" />
          <path d="M12 1h3L8 26l-3 8H1z" fill="#a8201c" />
          <path d="M15 10l4 10h-8z" fill="#d8d5da" />
          <path d="M6 24l14-11 3 9-14 3z" fill="#ee5a48" />
          <path d="M15 12l2 5-5 3z" fill="#efecf0" />
        </svg>
        <Caret size={8} color="#2a282b" />
      </AppButton>
      <RibbonTabs>
        <RibbonTab $active>Home</RibbonTab>
        {RIBBON_TABS.map((name) => (
          <RibbonTab key={name}>{name}</RibbonTab>
        ))}
      </RibbonTabs>
      <Ribbon />
      <FileTabs>
        <FileTab>Start</FileTab>
        <FileTab $active>
          Drawing1
          <svg width="9" height="9" viewBox="0 0 9 9" aria-hidden="true">
            <path d="M1 1l7 7M8 1L1 8" stroke="#4b484c" strokeWidth="2" />
          </svg>
        </FileTab>
        <AddFile aria-label="New drawing">+</AddFile>
      </FileTabs>
      <Canvas />
      <StatusBar />
      <CustomizeMenu />
      <Pointer width="16" height="24" viewBox="0 0 16 24">
        <path d="M1 1v18l4-4 4 8 3-2-3-7h6z" fill="#fff" stroke="#111" />
      </Pointer>
    </CadWindow>
  );
}

function App() {
  return (
    <>
      <GlobalStyle />
      <Desktop>
        <Notepad />
        <AutoCad />
      </Desktop>
    </>
  );
}

export default App;

const GlobalStyle = createGlobalStyle`
  * {
    box-sizing: border-box;
  }
  body {
    margin: 0;
    background: #000;
    font-family: 'Noto Sans', 'Open Sans', sans-serif;
    font-size: 14px;
  }
  button, input, select, textarea {
    margin: 0;
    padding: 0;
    border: none;
    outline: none;
    background: none;
    color: inherit;
    font: inherit;
  }
  svg {
    display: block;
    flex: none;
  }
`;
const Desktop = styled.div`
  display: flex;
  min-height: 100vh;
  padding: 16px 0 17px;
  overflow: hidden;
`;

const NotepadWindow = styled.section`
  flex: 0 1 488px;
  display: flex;
  flex-direction: column;
  margin: 4px 0 41px;
  border-left: 3px solid #aaa3ac;
  border-right: 1px solid #a9c3ee;
  background: #fdf7fe;
`;
const NoteTitleBar = styled.header`
  display: flex;
  align-items: center;
  gap: 5px;
  height: 38px;
  padding-left: 6px;
  color: #9a949c;
`;
const NoteTitle = styled.h1`
  flex: 1;
  margin: 0;
  font-size: 14px;
  font-weight: 400;
`;
const WindowButton = styled.button`
  display: flex;
  align-items: center;
  justify-content: center;
  width: 48px;
  height: 30px;
  & + & {
    margin-left: 5px;
  }
`;
const NoteMenu = styled.nav`
  display: flex;
  gap: 19px;
  height: 25px;
  padding-left: 4px;
  color: #5f5963;
`;
const NoteMenuButton = styled.button`
  line-height: 24px;
`;
const NoteBody = styled.div`
  flex: 1;
  display: flex;
`;
const NoteText = styled.textarea`
  flex: 1;
  min-width: 0;
  padding: 0 3px;
  resize: none;
  overflow: hidden;
  font-family: 'DejaVu Sans', sans-serif;
  font-size: 27px;
  line-height: 32px;
  color: #0b090c;
  &::selection {
    background: #0070dc;
    color: #f2f8ff;
  }
`;
const VerticalScroll = styled.div`
  display: flex;
  flex-direction: column;
  align-items: flex-end;
  justify-content: space-between;
  width: 16px;
  padding: 10px 1px 8px 0;
  background: linear-gradient(90deg, #f1ebf2 60%, #ddd8e2 60%);
`;
const HorizontalScroll = styled.div`
  display: flex;
  align-items: center;
  gap: 8px;
  height: 20px;
  padding: 0 1px;
  background: #f6f0f7;
  svg + svg {
    margin-left: 7px;
    margin-top: 8px;
  }
`;
const ScrollThumb = styled.div`
  flex: 1;
  height: 19px;
  margin-right: 7px;
  background: #d0cad0;
`;

const barGradient = css`
  background: linear-gradient(#8a878b, #5a585b 60%, #626063);
`;
const center = css`
  display: flex;
  align-items: center;
  justify-content: center;
`;

const CadWindow = styled.main`
  position: relative;
  flex: 1;
  min-width: 0;
  display: flex;
  flex-direction: column;
  border-top: 1px solid #8a868a;
  border-left: 2px solid #2a3a86;
  border-right: 4px solid #101030;
  background: #343234;
  color: #e9e6ec;
`;
const CadTitleBar = styled.header`
  display: flex;
  align-items: flex-end;
  height: 34px;
  background: #fdf9fe;
`;
const QuickAccess = styled.div`
  display: flex;
  align-items: center;
  height: 31px;
  margin-left: 51px;
  padding-left: 6px;
  padding-bottom: 2px;
  border-top: 1px solid #555;
  ${barGradient}
`;
const BarButton = styled.button`
  ${center}
  width: ${(props) => props.$width}px;
  height: 28px;
`;
const Fx = styled.i`
  font-family: 'Liberation Serif', serif;
  font-size: 20px;
  color: #aaa7ac;
`;
const FileTitle = styled.h2`
  flex: 1;
  height: 34px;
  margin: 0;
  padding-left: 18px;
  text-align: center;
  font-size: 14px;
  font-weight: 400;
  line-height: 28px;
  color: #1d1b1e;
`;
const InfoCenter = styled.div`
  display: flex;
  align-items: center;
  height: 31px;
  padding-bottom: 2px;
  border-top: 1px solid #555;
  ${barGradient}
`;
const SearchInput = styled.input`
  width: 229px;
  height: 28px;
  padding: 0 3px;
  border: 1px solid #2e2c2f;
  background: #6d696e;
  font-size: 14px;
  &::placeholder {
    color: #c6c2c8;
    font-style: italic;
  }
`;
const SignIn = styled.button`
  display: flex;
  align-items: center;
  gap: 6px;
  width: 153px;
  padding-left: 3px;
  padding-right: 8px;
  span {
    flex: 1;
    text-align: left;
  }
`;
const Divider = styled.div`
  width: 1px;
  height: 24px;
  margin-left: 8px;
  margin-right: 7px;
  background: #8b888c;
`;
const HelpMark = styled.span`
  ${center}
  width: 20px;
  height: 20px;
  border-radius: 50%;
  background: #f6f8fc;
  box-shadow: 0 0 0 1px #222;
  color: #20497f;
  font-size: 16px;
  font-weight: 700;
`;
const CadWindowButtons = styled.div`
  display: flex;
  width: 207px;
  height: 34px;
  padding-left: 36px;
`;

const AppButton = styled.button`
  position: absolute;
  top: 3px;
  left: 0;
  display: flex;
  align-items: center;
  width: 51px;
  height: 52px;
  padding: 0 1px 12px 5px;
  gap: 2px;
  border: 1px solid #1c1a1d;
  background: linear-gradient(#a09da2, #77747a 70%, #8b888e);
`;
const RibbonTabs = styled.nav`
  display: flex;
  align-items: flex-end;
  height: 26px;
  padding-left: 57px;
  overflow: hidden;
  background: #4a484b;
  border-bottom: 1px solid #2b292c;
`;
const RibbonTab = styled.button`
  flex: none;
  height: 22px;
  padding: 0 13px;
  line-height: 19px;
  color: ${(props) => (props.$active ? '#f5f2f7' : '#cbc7cd')};
  ${(props) =>
    props.$active &&
    css`
      margin-right: 6px;
      border: 1px solid #2b292c;
      border-bottom: none;
      background: linear-gradient(#6c696e, #535154);
      line-height: 17px;
    `}
`;

const RibbonBar = styled.div`
  display: flex;
  height: 126px;
  overflow: hidden;
  background: #535154;
  border-bottom: 2px solid #78757a;
`;
const PanelBox = styled.section`
  flex: none;
  display: flex;
  flex-direction: column;
  width: ${(props) => props.$width}px;
  border-right: 1px solid #333134;
`;
const PanelBody = styled.div`
  flex: 1;
  display: flex;
  align-items: flex-start;
`;
const PanelTitle = styled.footer`
  display: flex;
  align-items: center;
  height: 22px;
  margin: 0 1px;
  background: #454346;
`;
const PanelName = styled.button`
  ${center}
  flex: 1;
  gap: 8px;
  line-height: 20px;
  white-space: nowrap;
`;
const LaunchButton = styled.button`
  ${center}
  width: 16px;
  height: 20px;
`;
const BigButton = styled.button`
  display: flex;
  flex-direction: column;
  align-items: center;
  width: ${(props) => props.$width}px;
  padding-top: 9px;
  line-height: 19px;
  span {
    margin-top: 6px;
  }
  span + svg {
    margin-top: 3px;
  }
`;
const IconGrid = styled.div`
  display: grid;
  grid-template-columns: ${(props) => props.$columns};
  grid-auto-rows: 30px;
  padding-top: 7px;
  padding-left: 2px;
`;
const ToolButton = styled.button`
  ${center}
`;
const CoordinateTools = styled.div`
  display: flex;
  gap: 2px;
`;
const UcsPicker = styled.label`
  display: flex;
  align-items: center;
  gap: 4px;
  height: 27px;
  margin-top: 1px;
  margin-left: 3px;
  padding-left: 4px;
  padding-right: 2px;
  border: 1px solid #2b292c;
  background: linear-gradient(#5e5b60, #4a484b);
  select {
    flex: 1;
    min-width: 0;
    appearance: none;
  }
`;
const ClosedPanels = styled.div`
  flex: 1;
  display: flex;
  gap: 3px;
  padding-left: 1px;
  overflow: hidden;
  background: #333134;
`;
const ClosedPanel = styled.button`
  flex: none;
  display: flex;
  flex-direction: column;
  align-items: center;
  width: 75px;
  padding-top: 6px;
  padding-bottom: 7px;
  line-height: 19px;
  background: linear-gradient(#6b666c 0, #656167 75px, #535154 75px, #535154 102px, #4a484b 102px);
  span {
    flex: 1;
    margin-top: 5px;
  }
`;

const FileTabs = styled.nav`
  display: flex;
  align-items: flex-end;
  height: 38px;
  padding-left: 21px;
  border-bottom: 5px solid #59575a;
  background: #333134;
`;
const FileTab = styled.button`
  display: flex;
  align-items: center;
  justify-content: space-between;
  width: 161px;
  height: 28px;
  padding: 0 20px 0 17px;
  clip-path: polygon(8px 0, calc(100% - 10px) 0, 100% 100%, 0 100%);
  color: ${(props) => (props.$active ? '#efecf1' : '#a7a3a9')};
  background: ${(props) =>
    props.$active ? 'linear-gradient(#757176, #59575a)' : '#524f53'};
`;
const addButton = css`
  ${center}
  width: 28px;
  background: #4a474b;
  color: #d3d0d5;
  font-size: 20px;
  font-weight: 700;
`;
const AddFile = styled.button`
  ${addButton}
  height: 20px;
  margin-left: 5px;
  margin-bottom: 3px;
  border-radius: 4px 12px 4px 10px;
`;

const DrawingArea = styled.div`
  position: relative;
  flex: 1;
  min-height: 480px;
  background: #000;
`;
const CubeSvg = styled.svg`
  position: absolute;
  top: 49px;
  right: 23px;
`;
const UcsSvg = styled.svg`
  position: absolute;
  left: 10px;
  bottom: 10px;
`;
const CommandBar = styled.div`
  position: absolute;
  left: 50%;
  bottom: 1px;
  display: flex;
  width: 60%;
  height: 34px;
  border: 1px solid #6d6a6e;
  transform: translateX(-50%);
`;
const CommandTools = styled.div`
  display: flex;
  align-items: center;
  justify-content: space-between;
  width: 67px;
  padding: 0 4px;
  background: linear-gradient(#4d4b4e, #2d2b2e);
`;
const PlainButton = styled.button`
  ${center}
`;
const CommandField = styled.div`
  flex: 1;
  display: flex;
  align-items: center;
  gap: 5px;
  padding: 0 4px 0 6px;
  background: #b7b1b8;
`;
const CommandInput = styled.input`
  flex: 1;
  padding-left: 5px;
  font-family: 'DejaVu Sans Mono', monospace;
  font-size: 15px;
  color: #333;
  &::placeholder {
    color: #6b666d;
    font-style: italic;
  }
`;

const BottomBar = styled.footer`
  display: flex;
  justify-content: space-between;
  height: 31px;
  border-top: 1px solid #6d6a6e;
  background: #333134;
`;
const LayoutTabs = styled.nav`
  display: flex;
  align-items: flex-start;
  padding-left: 11px;
`;
const LayoutTab = styled.button`
  width: 80px;
  height: 22px;
  clip-path: polygon(0 0, 100% 0, calc(100% - 8px) 100%, 8px 100%);
  font-weight: ${(props) => (props.$active ? 700 : 400)};
  color: ${(props) => (props.$active ? '#fff' : '#aeabb0')};
  background: ${(props) =>
    props.$active ? 'linear-gradient(#5c595d, #817d83)' : '#535054'};
  line-height: 20px;
`;
const AddLayout = styled.button`
  ${addButton}
  height: 20px;
  margin-left: 8px;
  border-radius: 10px 4px 12px 4px;
`;
const StatusTools = styled.div`
  display: flex;
  margin-right: 3px;
  background: #4a484b;
`;
const StatusGroup = styled.div`
  display: flex;
  border-left: 1px solid #858287;
  ${(props) =>
    props.$gap &&
    css`
      margin-right: 2px;
      border-right: 1px solid #858287;
    `}
`;
const StatusButton = styled.button`
  ${center}
  width: ${(props) => (props.$narrow ? 21 : 30)}px;
`;
const ModelButton = styled.button`
  width: 61px;
  color: #f5f2f7;
`;
const ScaleButton = styled.button`
  ${center}
  gap: 5px;
  width: 45px;
  color: #f5f2f7;
`;

const MenuBox = styled.div`
  position: absolute;
  top: -1px;
  right: -4px;
  bottom: 31px;
  display: flex;
  flex-direction: column;
  width: 107px;
  padding-bottom: 2px;
  overflow: hidden;
  border-left: 2px solid #858287;
  background: #4a484b;
`;
const MenuItem = styled.button`
  flex: 1;
  display: flex;
  align-items: center;
  gap: 5px;
  padding-left: 6px;
  white-space: nowrap;
  color: #f7f4f9;
  ${(props) =>
    props.$hover &&
    css`
      box-shadow: inset 0 1px #262427, inset 0 -1px #262427;
      background: linear-gradient(#6d686f, #4f4d50);
    `}
`;
const MenuLine = styled.div`
  height: 1px;
  margin: 3px 0 2px;
  background: #a19ea3;
`;
const Pointer = styled.svg`
  position: absolute;
  top: 537px;
  right: 24px;
`;
